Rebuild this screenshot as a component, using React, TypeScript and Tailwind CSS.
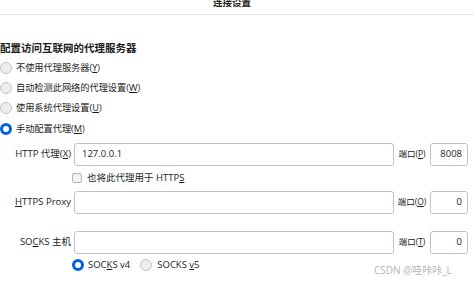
import React from "react";

function Radio({ checked = false }: { checked?: boolean }) {
  return checked ? (
    <span className="box-border block h-[12px] w-[12px] shrink-0 rounded-full border-[3.5px] border-[#0061e0] bg-white" />
  ) : (
    <span className="box-border block h-[12px] w-[12px] shrink-0 rounded-full border border-[#c4c4c4] bg-[#eeeeee]" />
  );
}

function Field({ label, value, port, portKey }: { label: React.ReactNode; value?: string; port: string; portKey: string }) {
  return (
    <div className="flex h-[23px] items-stretch">
      <div className="flex w-[71px] items-center justify-end text-[9.5px]">{label}</div>
      <div className="ml-[3px] flex w-[320px] items-center rounded-[3px] border border-[#c2c2c2] bg-white pl-[7px] text-[9.5px]">
        {value}
      </div>
      <div className="flex w-[36px] items-center justify-center text-[8.5px]">
        端口(<u>{portKey}</u>)
      </div>
      <div className="flex w-[38px] items-center justify-end rounded-[3px] border border-[#c2c2c2] bg-white pr-[5px] text-[9.5px]">
        {port}
      </div>
    </div>
  );
}

const options = [
  { text: "不使用代理服务器", key: "Y" },
  { text: "自动检测此网络的代理设置", key: "W" },
  { text: "使用系统代理设置", key: "U" },
];

export default function App() {
  return (
    <div className="relative h-[283px] w-[474px] overflow-hidden bg-white font-['Open_Sans','Noto_Sans_CJK_SC',sans-serif] text-[#1c1b22]">
      <header className="h-[17px] border-b border-[#e6e6e6]">
        <div className="mt-[-2px] pl-[213px] text-[9.5px] font-bold leading-[10px]">连接设置</div>
      </header>

      <div className="mt-[27px]">
        <h2 className="h-[12px] text-[10.5px] font-bold leading-[12px]">配置访问互联网的代理服务器</h2>

        <div className="mt-[4px]">
          {options.map((o) => (
            <div key={o.key} className="flex h-[20px] items-center">
              <Radio />
              <span className="ml-[4px] text-[9.2px]">
                {o.text}(<u>{o.key}</u>)
              </span>
            </div>
          ))}
          <div className="flex h-[21px] items-center">
            <Radio checked />
            <span className="ml-[4px] text-[9.2px]">
              手动配置代理(<u>M</u>)
            </span>
          </div>
        </div>

        <div className="mt-[4px]">
          <Field label={<>HTTP 代理(<u>X</u>)</>} value="127.0.0.1" port="8008" portKey="P" />
          <div className="flex h-[24px] items-center pl-[72px]">
            <span className="box-border block h-[10px] w-[10px] rounded-[2px] border border-[#b8b8b8] bg-[#f2f2f2]" />
            <span className="ml-[5px] text-[9.5px]">
              也将此代理用于 HTTP<u>S</u>
            </span>
          </div>
          <div className="mt-[1px]">
            <Field label={<><u>H</u>TTPS Proxy</>} port="0" portKey="O" />
          </div>
          <div className="mt-[17px]">
            <Field label={<>SO<u>C</u>KS 主机</>} port="0" portKey="T" />
          </div>
          <div className="flex h-[22px] items-center pl-[72px] text-[9.5px]">
            <Radio checked />
            <span className="ml-[4px]">
              SOC<u>K</u>S v4
            </span>
            <span className="ml-[10px]">
              <Radio />
            </span>
            <span className="ml-[5px]">
              SOCKS <u>v</u>5
            </span>
          </div>
        </div>
      </div>

      <div className="absolute left-[374px] top-[264px] text-[10px] leading-[12px] text-[#b5b5b5]">CSDN @哇咔咔_L</div>
    </div>
  );
}
